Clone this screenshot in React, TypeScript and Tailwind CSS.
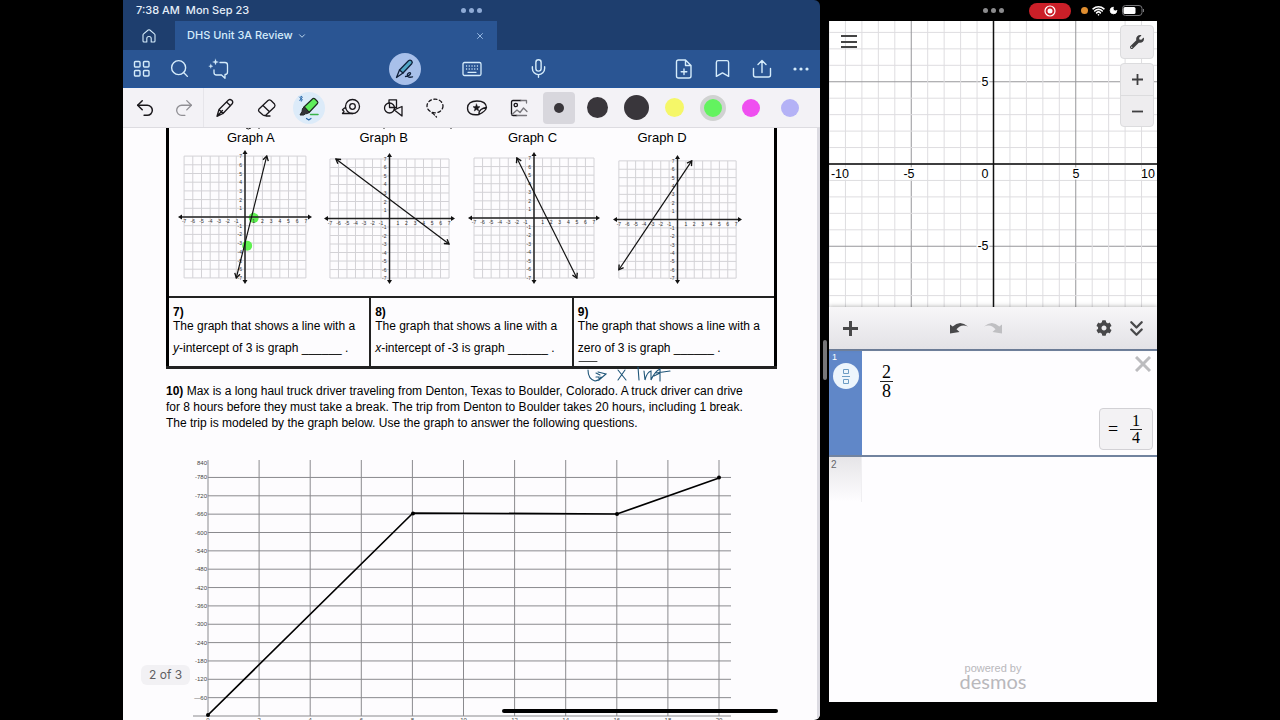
import React from 'react';
import { ChevronDown, X, Search, Mic, Bookmark, Undo2, Redo2, Wifi, Moon, ChevronsDown } from 'lucide-react';
import { FaWrench, FaCog } from 'react-icons/fa';

const miniGraphs = [
  { name: 'Graph A', size: 134, from: [2.5, 7], to: [-1, -7], marks: [[1, -0.1], [0.25, -3.3]] },
  { name: 'Graph B', size: 131, from: [-6.3, 7], to: [7, -3], marks: [] },
  { name: 'Graph C', size: 132, from: [-2, 7], to: [5, -7], marks: [] },
  { name: 'Graph D', size: 129, from: [1.7, 7], to: [-7, -6], marks: [] },
];

const questions = [
  { number: '7)', variable: 'y', rest: '-intercept of 3 is graph ______ .' },
  { number: '8)', variable: 'x', rest: '-intercept of -3 is graph ______ .' },
  { number: '9)', variable: '', rest: 'zero of 3 is graph ______ .' },
];

const ticks = [-7, -6, -5, -4, -3, -2, -1, 1, 2, 3, 4, 5, 6, 7];

function MiniGraph({ graph }: { graph: (typeof miniGraphs)[number] }) {
  const half = graph.size / 2;
  const unit = half / 7.7;
  const end = 7 * unit;
  const x1 = graph.from[0] * unit;
  const y1 = -graph.from[1] * unit;
  const x2 = graph.to[0] * unit;
  const y2 = -graph.to[1] * unit;
  const id = graph.name.replace(' ', '-');

  return (
    <svg
      width={graph.size}
      height={graph.size}
      viewBox={`${-half} ${-half} ${graph.size} ${graph.size}`}
      role="img"
      aria-label={graph.name}
    >
      <defs>
        <marker id={id} viewBox="0 0 8 8" refX="7" refY="4" markerWidth="6" markerHeight="6" orient="auto-start-reverse">
          <path d="M2 1 L7 4 L2 7" fill="none" stroke="#111" strokeWidth="1.5" />
        </marker>
      </defs>
      {[...ticks, 0].map((t) => (
        <g key={t} stroke="#d3d2d6" strokeWidth="1">
          <line x1={t * unit} x2={t * unit} y1={-end} y2={end} />
          <line y1={t * unit} y2={t * unit} x1={-end} x2={end} />
        </g>
      ))}
      {graph.marks.map(([x, y]) => (
        <circle key={y} cx={x * unit} cy={-y * unit} r="5" fill="#5ef04f" />
      ))}
      <line x1={-half + 2} x2={half - 2} y1="0" y2="0" stroke="#222" strokeWidth="1.5" />
      <line y1={-half + 2} y2={half - 2} x1="0" x2="0" stroke="#222" strokeWidth="1.5" />
      <g fill="#111">
        <path d={`M${-half} 0 l4 -2.5 v5z`} />
        <path d={`M${half} 0 l-4 -2.5 v5z`} />
        <path d={`M0 ${-half} l-2.5 4 h5z`} />
        <path d={`M0 ${half} l-2.5 -4 h5z`} />
      </g>
      <g fill="#333" fontSize="5" fontFamily="Liberation Sans, sans-serif">
        {ticks.map((t) => (
          <text key={`x${t}`} x={t * unit} y="6" textAnchor="middle">{t}</text>
        ))}
        {ticks.map((t) => (
          <text key={`y${t}`} x="-3" y={-t * unit + 2} textAnchor="end">{t}</text>
        ))}
      </g>
      <line
        x1={x1}
        y1={y1}
        x2={x2}
        y2={y2}
        stroke="#111"
        strokeWidth="1.2"
        markerStart={`url(#${id})`}
        markerEnd={`url(#${id})`}
      />
    </svg>
  );
}

function TripChart() {
  const left = 42;
  const bottom = 257;
  const col = 51.1;
  const row = 18.35;
  const rows = Array.from({ length: 14 }, (_, i) => i);
  const cols = Array.from({ length: 11 }, (_, i) => i);

  return (
    <svg viewBox="0 0 611 270" className="mt-7 block w-full" role="img" aria-label="Distance over time of the trip">
      <g stroke="#8a8a8e" strokeWidth="1">
        {rows.map((r) => (
          <line key={r} x1={r === 0 ? 27 : left} x2="565" y1={bottom - r * row} y2={bottom - r * row} />
        ))}
        {cols.map((c) => (
          <line key={c} x1={left + c * col} x2={left + c * col} y1="1" y2={bottom} />
        ))}
      </g>
      <g fill="#444" fontSize="6" fontFamily="Liberation Sans, sans-serif">
        {rows.slice(1).map((r) => (
          <text key={r} x="41" y={bottom - r * row + 2} textAnchor="end">{r === 1 ? '—60' : `-${r * 60}`}</text>
        ))}
        <text x="41" y="6" textAnchor="end">840</text>
        {cols.map((c) => (
          <text key={c} x={left + c * col} y="263" textAnchor="middle">{c * 2}</text>
        ))}
      </g>
      <polyline points="42,256 247,54 451,55 553,19" fill="none" stroke="#000" strokeWidth="1.7" />
      <g fill="#000">
        <circle cx="42" cy="256" r="2" />
        <circle cx="247" cy="54.5" r="2" />
        <circle cx="451" cy="55" r="2" />
        <circle cx="553" cy="18.5" r="2" />
      </g>
    </svg>
  );
}

function Dots({ className }: { className: string }) {
  return (
    <span className={`flex gap-[3px] ${className}`}>
      <i className="size-[5px] rounded-full bg-current" />
      <i className="size-[5px] rounded-full bg-current" />
      <i className="size-[5px] rounded-full bg-current" />
    </span>
  );
}

function NavButton({ label, className = 'w-[39px]', children }: { label: string; className?: string; children: React.ReactNode }) {
  return (
    <button type="button" aria-label={label} className={`flex h-full items-center justify-center ${className}`}>
      {children}
    </button>
  );
}

function NotesHeader() {
  return (
    <header className="bg-[#1e3e6e] text-[#d5ecfb]">
      <div className="grid h-[21px] grid-cols-[1fr_auto_1fr] items-center px-[13px] font-['Inter',sans-serif] text-[11px] font-medium">
        <div className="flex gap-1.5 text-[#e3edf8]">
          <span>7:38 AM</span>
          <span>Mon Sep 23</span>
        </div>
        <Dots className="text-[#8fabd6]" />
      </div>
      <div className="flex h-[29px]">
        <NavButton label="Home" className="w-[52px]">
          <svg width="14" height="14" viewBox="0 0 14 14" fill="none" stroke="currentColor" strokeWidth="1.1" strokeLinejoin="round">
            <path d="M1 6 Q1 5.300 1.600 4.800 L6.200 1 Q7 .5 7.800 1 L12.400 4.800 Q13 5.300 13 6 V12 Q13 13 12 13 H9.200 V9.500 Q9.200 7.500 7 7.500 Q4.800 7.500 4.800 9.500 V13 H2 Q1 13 1 12Z" />
          </svg>
        </NavButton>
        <div className="flex w-[322px] items-center bg-[#2a5593] px-3 font-['Inter',sans-serif] text-[11px] font-medium">
          <span>DHS Unit 3A Review</span>
          <button type="button" aria-label="Document menu" className="ml-1">
            <ChevronDown size={10} strokeWidth={2} />
          </button>
          <button type="button" aria-label="Close tab" className="ml-auto text-[#a9c9ee]">
            <X size={10} strokeWidth={2} />
          </button>
        </div>
      </div>
      <nav className="grid h-[38px] grid-cols-[1fr_auto_1fr] border-b border-[#23569e] bg-[#2a5593]">
        <div className="flex">
          <NavButton label="Thumbnails" className="w-[37px]">
            <svg width="18" height="18" viewBox="0 0 18 18" fill="none" stroke="currentColor" strokeWidth="1.4">
              <rect x="1.500" y="1.500" width="5.500" height="5.500" rx="1" />
              <rect x="10.500" y="1.500" width="5.500" height="5.500" rx="1" />
              <rect x="1.500" y="10.500" width="5.500" height="5.500" rx="1" />
              <rect x="10.500" y="10.500" width="5.500" height="5.500" rx="1" />
            </svg>
          </NavButton>
          <NavButton label="Search">
            <Search size={21} strokeWidth={1.6} />
          </NavButton>
          <NavButton label="Ask AI">
            <svg width="22" height="22" viewBox="0 0 22 22" fill="none" stroke="currentColor" strokeWidth="1.3" strokeLinecap="round" strokeLinejoin="round">
              <path d="M12 4.500 H17 Q19.500 4.500 19.500 7 V14 Q19.500 16.500 17 16.500 V20.300 L13.500 17 H8.500 Q6 17 6 14.500 V12" />
              <path d="M7.500 1 L8.300 3.200 L10.500 4 L8.300 4.800 L7.500 7 L6.700 4.800 L4.500 4 L6.700 3.200Z" fill="currentColor" strokeWidth=".2" />
              <path d="M2.800 6 L3.400 7.600 L5 8.200 L3.400 8.800 L2.800 10.400 L2.200 8.800 L.6 8.200 L2.200 7.600Z" fill="currentColor" strokeWidth=".2" />
            </svg>
          </NavButton>
        </div>
        <div className="flex">
          <NavButton label="Annotate" className="w-[67px]">
            <span className="flex size-8 items-center justify-center rounded-full bg-[#a8c0ea]">
              <svg width="22" height="22" viewBox="0 0 22 22" fill="none" stroke="#10203a" strokeWidth="1.300" strokeLinecap="round" strokeLinejoin="round">
                <path d="M5.500 12 L14.500 2.800 Q16 1.500 17.500 2.800 Q19 4.300 17.700 5.800 L9 15 L5.500 12Z" fill="#51a5c4" />
                <path d="M5.500 12 L2.500 19.500 L9 15" />
                <path d="M11.500 18.500 Q15.500 18 16.500 15.800 Q16.800 14.300 15 14.800 Q12.800 16 13.500 18 Q14.500 20 18.500 18.800" />
              </svg>
            </span>
          </NavButton>
          <NavButton label="Keyboard" className="w-[67px]">
            <svg width="20" height="16" viewBox="0 0 20 16" fill="none" stroke="currentColor" strokeWidth="1.300" strokeLinecap="round">
              <rect x="1" y="1.500" width="18" height="13" rx="1.500" />
              <path d="M4.500 5 h.1 M7.200 5 h.1 M10 5 h.1 M12.700 5 h.1 M15.400 5 h.1 M4.500 8 h.1 M7.200 8 h.1 M10 8 h.1 M12.700 8 h.1 M15.400 8 h.1 M6 11.300 h8" />
            </svg>
          </NavButton>
          <NavButton label="Record" className="w-[67px]">
            <Mic size={21} strokeWidth={1.6} />
          </NavButton>
        </div>
        <div className="flex justify-end">
          <NavButton label="Add page">
            <svg width="18" height="20" viewBox="0 0 18 20" fill="none" stroke="currentColor" strokeWidth="1.400" strokeLinecap="round" strokeLinejoin="round">
              <path d="M3.500 1 H10.500 L16 6.500 V17 Q16 19 14 19 H3.500 Q1.500 19 1.500 17 V3 Q1.500 1 3.500 1Z M10.500 1 V6.500 H16 M9 10 v5.500 M6.200 12.700 h5.600" />
            </svg>
          </NavButton>
          <NavButton label="Bookmark">
            <Bookmark size={21} strokeWidth={1.6} />
          </NavButton>
          <NavButton label="Share">
            <svg width="20" height="20" viewBox="0 0 20 20" fill="none" stroke="currentColor" strokeWidth="1.400" strokeLinecap="round" strokeLinejoin="round">
              <path d="M1.500 9.500 V16 Q1.500 18 3.500 18 H16.500 Q18.500 18 18.500 16 V9.500 M10 13.500 V1.500 M6 5.500 L10 1.500 L14 5.500" />
            </svg>
          </NavButton>
          <NavButton label="More">
            <svg width="16" height="4" viewBox="0 0 16 4" fill="currentColor">
              <circle cx="2" cy="2" r="1.600" />
              <circle cx="8" cy="2" r="1.600" />
              <circle cx="14" cy="2" r="1.600" />
            </svg>
          </NavButton>
        </div>
      </nav>
    </header>
  );
}

const swatches = [
  { label: 'Thin stroke', dot: 'size-[10px] bg-[#39363b]', holder: 'rounded bg-[#d8d7dd]' },
  { label: 'Medium stroke', dot: 'size-[21px] bg-[#39363b]', holder: '' },
  { label: 'Thick stroke', dot: 'size-[25px] bg-[#39363b]', holder: '' },
  { label: 'Yellow', dot: 'size-[19px] bg-[#f5f768]', holder: '' },
  { label: 'Green', dot: 'size-[26px] border-4 border-[#d0d2d1] bg-[#63f35f]', holder: '' },
  { label: 'Pink', dot: 'size-[18px] bg-[#ef4ff0]', holder: '' },
  { label: 'Lavender', dot: 'size-[18px] bg-[#b4b2f6]', holder: '' },
];

function PenToolbar() {
  const icon = {
    width: 22,
    height: 22,
    viewBox: '0 0 22 22',
    fill: 'none',
    stroke: '#19171b',
    strokeWidth: 1.3,
    strokeLinecap: 'round' as const,
    strokeLinejoin: 'round' as const,
  };

  return (
    <div className="flex h-10 border-b border-[#dddce1] bg-[#f3f2f6] pl-0.5 text-[#19171b]">
      <div className="flex border-r border-[#e6e5ea]">
        <NavButton label="Undo">
          <Undo2 size={22} strokeWidth={1.6} />
        </NavButton>
        <NavButton label="Redo">
          <Redo2 size={22} strokeWidth={1.4} className="text-[#8f8e93]" />
        </NavButton>
      </div>
      <div className="flex">
        <NavButton label="Pen" className="w-[42px]">
          <svg {...icon}>
            <path d="M5 12.500 L14.500 3 Q16 1.800 17.800 3.300 Q19.500 5 18.200 6.800 L9 16.500 L3 19.300Z M12.500 5 L16.500 8.700 M5 12.500 L9 16.500 M3 19.300 L8.500 13.500" />
          </svg>
        </NavButton>
        <NavButton label="Eraser" className="w-[42px]">
          <svg {...icon}>
            <path d="M3 12 L12 3.500 Q13.500 2.300 15 3.500 L18.500 7 Q19.500 8.500 18.500 10 L10 18 Q8.500 19 7 18 L3 14.500 Q2 13.200 3 12Z M7 8.500 L13.500 14.800 M10 19 H14" />
          </svg>
        </NavButton>
        <NavButton label="Highlighter" className="w-[42px]">
          <span className="flex size-8 items-center justify-center rounded-full bg-[#dcebf9]">
            <svg width="26" height="28" viewBox="0 0 26 28" fill="none" strokeLinecap="round" strokeLinejoin="round">
              <path d="M8 13 L17 4.500 Q18 4 19 5 L21.500 7.500 Q22.300 8.500 21.500 9.500 L13 18.500Z" fill="#5fec5b" stroke="#1d2a20" strokeWidth="1.200" />
              <path d="M8 13 L6.500 14.500 L6 17.500 L4 21 H7.500 L9.500 19.800 L11.500 19.500 L13 18.500Z" fill="#343438" stroke="#222" />
              <path d="M14.500 20.500 H22" stroke="#38b34a" strokeWidth="1.500" />
              <path d="M3.500 3 L6.500 6 L5 7.300 V2 L6.500 3.300 L3.500 6.300" stroke="#2767a8" strokeWidth=".9" />
              <path d="M10.500 24.500 L12.800 26 L15 24.500" stroke="#2767a8" strokeWidth="1.200" />
            </svg>
          </span>
        </NavButton>
        <NavButton label="Tape" className="w-[42px]">
          <svg {...icon}>
            <circle cx="12.500" cy="9.500" r="7" />
            <circle cx="12.500" cy="9.500" r="2.800" />
            <path d="M12.500 16.500 H2.500 L4 14.500 L2.500 12.800 L4.500 11 H5.700" />
          </svg>
        </NavButton>
        <NavButton label="Shapes" className="w-[42px]">
          <svg {...icon}>
            <path d="M7 6 V2.800 H14.500 V10.500 H12" />
            <circle cx="7.500" cy="11" r="5" />
            <path d="M12 12.800 L20 9.500 V19Z M7.500 6 V10.500 H12.500" />
          </svg>
        </NavButton>
        <NavButton label="Lasso" className="w-[42px]">
          <svg {...icon}>
            <ellipse cx="11" cy="9" rx="8" ry="6.800" strokeDasharray="3 2.600" />
            <path d="M8 16 Q9.500 16.500 10.500 18 M12 19.500 L12.500 20" />
          </svg>
        </NavButton>
        <NavButton label="Stickers" className="w-[42px]">
          <svg {...icon}>
            <path d="M13 17.500 Q1.500 19 1.500 11 Q2 4 11 4 Q20 4 20.500 10.500 Q20 14 13 17.500Z M13 17.500 Q12.500 14.500 15 12.500 Q17 11 20.500 10.500" />
            <path d="M10.500 7 L11.500 9.500 L14 9.700 L12 11.400 L12.700 14 L10.500 12.600 L8.300 14 L9 11.400 L7 9.700 L9.500 9.500Z" fill="#19171b" strokeWidth=".5" />
          </svg>
        </NavButton>
        <NavButton label="Image" className="w-[42px]">
          <svg {...icon}>
            <path d="M13 3.500 H5 Q3.500 3.500 3.500 5 V17 Q3.500 18.500 5 18.500 H9" />
            <circle cx="7.800" cy="8" r="1.700" />
            <path d="M13 3.500 H18.500 V6 M9 18.500 H18.500 M4 17.500 L9 13 L12 15.500 L15.500 11 L19 14.500" stroke="#77767b" />
          </svg>
        </NavButton>
      </div>
      <div className="grid flex-1 grid-cols-7 pr-[11px]">
        {swatches.map((s) => (
          <button key={s.label} type="button" aria-label={s.label} className="flex items-center justify-center">
            <span className={`flex size-8 items-center justify-center ${s.holder}`}>
              <i className={`rounded-full ${s.dot}`} />
            </span>
          </button>
        ))}
      </div>
    </div>
  );
}

function Worksheet() {
  return (
    <main className="relative flex-1 overflow-hidden border-r-3 border-[#dcdbe2] bg-[#fdfcfe] pr-10 pl-[43px] font-['Liberation_Sans',Arial,sans-serif] text-xs text-black">
      <table className="w-full table-fixed border-collapse border-3 border-t-0 border-black text-left">
        <tbody>
          <tr>
            <td colSpan={3} className="h-[169px] p-0 align-top">
              <svg width="300" height="2" viewBox="0 0 300 2" className="block" stroke="#222" fill="none">
                <path d="M77 0 Q79 2 82 0 M90 0 v1 M215 0 v1 M282 0 v1" />
              </svg>
              <div className="grid grid-cols-[133fr_149fr_130fr_137fr] pl-[58px] text-[13px] leading-4">
                {miniGraphs.map((g) => (
                  <span key={g.name}>{g.name}</span>
                ))}
              </div>
              <div className="mt-1 grid grid-cols-4 items-end justify-items-center pr-6 pl-1">
                {miniGraphs.map((g) => (
                  <MiniGraph key={g.name} graph={g} />
                ))}
              </div>
            </td>
          </tr>
          <tr>
            {questions.map((q) => (
              <td key={q.number} className="relative h-[70px] border-2 border-b-3 border-[#222] py-0 pt-[7px] pl-1 align-top leading-[14px]">
                <b>{q.number}</b>
                <p className="whitespace-nowrap">The graph that shows a line with a</p>
                <p className="mt-2 whitespace-nowrap">
                  {q.variable && <i>{q.variable}</i>}
                  {q.rest}
                </p>
                {q.number === '9)' && (
                  <svg width="96" height="26" viewBox="0 0 96 26" fill="none" strokeLinecap="round" className="absolute top-[61px] left-1">
                    <path d="M1 2.500 H19" stroke="#444" />
                    <path
                      d="M10 11 Q10 20 17 22 Q22 21 23 18 M18 14 L22 16 M20 13 L28 15 L21 21 L21 18 L18 18 M40 11 L48 21 M47 11 L40 21 M60 8 L61 21 M66 12 L67 21 Q69 13 73 12 L73 21 Q77 12 82 10 L82 22 M76 17 L82 14 M78 14 L92 12"
                      stroke="#1f5578"
                      strokeWidth="1.100"
                    />
                  </svg>
                )}
              </td>
            ))}
          </tr>
        </tbody>
      </table>
      <p className="mt-3.5 leading-4 whitespace-nowrap">
        <b>10)</b> Max is a long haul truck driver traveling from Denton, Texas to Boulder, Colorado. A truck driver can drive
        <br />
        for 8 hours before they must take a break. The trip from Denton to Boulder takes 20 hours, including 1 break.
        <br />
        The trip is modeled by the graph below. Use the graph to answer the following questions.
      </p>
      <TripChart />
      <span className="absolute bottom-[35px] left-[18px] rounded-md bg-[#f2f1f4] px-2 py-0.5 font-['Inter',sans-serif] text-xs text-[#5f5e63]">
        2 of 3
      </span>
      <div className="absolute right-[39px] bottom-[7px] h-1 w-[276px] rounded-full bg-black" />
    </main>
  );
}

function GraphPaper() {
  const unit = 16.45;
  const lines = Array.from({ length: 21 }, (_, i) => i - 10);

  return (
    <svg viewBox="0 0 328 286" preserveAspectRatio="xMidYMid slice" className="h-full w-full bg-white" role="img" aria-label="Coordinate plane">
      {lines.map((n) => (
        <g key={n} stroke={n % 5 === 0 && Math.abs(n) < 10 ? '#97979a' : '#dedde0'} strokeWidth="1">
          <line x1={164.5 + n * unit} x2={164.5 + n * unit} y1="0" y2="286" />
          <line y1={143 + n * unit} y2={143 + n * unit} x1="0" x2="328" />
        </g>
      ))}
      <path d="M164.500 0 V286 M0 143 H328" stroke="#111" strokeWidth="1.500" />
      <g fontSize="12.500" fontFamily="Liberation Sans, Arial, sans-serif" textAnchor="middle" fill="#000" stroke="#fff" strokeWidth="3" paintOrder="stroke">
        <text x="11" y="157">-10</text>
        <text x="80" y="157">-5</text>
        <text x="156" y="157">0</text>
        <text x="247" y="157">5</text>
        <text x="319" y="157">10</text>
        <text x="156" y="65">5</text>
        <text x="154" y="229">-5</text>
      </g>
    </svg>
  );
}

function Fraction({ top, bottom, className }: { top: string; bottom: string; className: string }) {
  return (
    <span className={`inline-flex flex-col items-center font-['Liberation_Serif',serif] ${className}`}>
      <span className="border-b border-[#222] px-0.5">{top}</span>
      <span>{bottom}</span>
    </span>
  );
}

function Calculator() {
  return (
    <section className="flex flex-col pb-[18px]">
      <div className="grid h-[21px] grid-cols-[1fr_auto_1fr] items-center">
        <span />
        <Dots className="text-[#8b8b8d]" />
        <div className="flex items-center justify-end gap-1 pr-3 text-white">
          <span className="mr-1.5 flex h-4 w-[42px] items-center justify-center rounded-full bg-[#cb1f28]">
            <svg width="12" height="12" viewBox="0 0 12 12">
              <circle cx="6" cy="6" r="5" fill="none" stroke="#fff" strokeWidth="1.200" />
              <circle cx="6" cy="6" r="2.500" fill="#fff" />
            </svg>
          </span>
          <i className="size-[7px] rounded-full bg-[#e08e30]" />
          <Wifi size={13} strokeWidth={3} />
          <Moon size={9} fill="currentColor" />
          <svg width="23" height="11" viewBox="0 0 23 11">
            <rect x=".5" y=".5" width="19.500" height="10" rx="3" fill="none" stroke="#77777a" />
            <rect x="1.500" y="2" width="12" height="7" rx="1.500" fill="#fff" />
            <path d="M21.500 4 v3" stroke="#77777a" />
          </svg>
        </div>
      </div>
      <div className="relative h-[286px]">
        <GraphPaper />
        <button type="button" aria-label="Open menu" className="absolute top-3.5 left-3 flex h-[13px] w-4 flex-col justify-between">
          <i className="h-0.5 w-full bg-[#444]" />
          <i className="h-0.5 w-full bg-[#444]" />
          <i className="h-0.5 w-full bg-[#444]" />
        </button>
        <div className="absolute top-1 right-[3px] flex flex-col gap-1 text-[#3f3f41]">
          <button type="button" aria-label="Graph settings" className="box-content flex size-8 items-center justify-center rounded border border-[#dcdcde] bg-[#eeedef]">
            <FaWrench size={14} />
          </button>
          <div className="rounded border border-[#dcdcde] bg-[#eeedef]">
            <button type="button" aria-label="Zoom in" className="flex h-8 w-8 items-center justify-center border-b border-[#dcdcde]">
              <svg width="11" height="11" viewBox="0 0 11 11" stroke="currentColor" strokeWidth="1.800">
                <path d="M5.500 0 V11 M0 5.500 H11" />
              </svg>
            </button>
            <button type="button" aria-label="Zoom out" className="flex h-[30px] w-8 items-center justify-center">
              <svg width="11" height="11" viewBox="0 0 11 11" stroke="currentColor" strokeWidth="1.800">
                <path d="M0 5.500 H11" />
              </svg>
            </button>
          </div>
        </div>
      </div>
      <div className="relative flex h-[42px] justify-between bg-linear-to-b from-[#f7f6f8] to-[#e3e2e6] text-[#48484a] shadow-[0_-1px_4px_rgba(0,0,0,0.25)]">
        <NavButton label="Add expression" className="w-[42px]">
          <svg width="15" height="15" viewBox="0 0 15 15" stroke="currentColor" strokeWidth="3">
            <path d="M7.500 0 V15 M0 7.500 H15" />
          </svg>
        </NavButton>
        <div className="flex pr-1.5">
          <NavButton label="Undo edit" className="w-[34px]">
            <svg width="18" height="12" viewBox="0 0 18 12" fill="currentColor">
              <path d="M0 2.500 L2.700 4.500 Q10 -2.500 18 4.500 Q11 1.500 6.500 7.300 L9.500 10 L0 11.500Z" />
            </svg>
          </NavButton>
          <NavButton label="Redo edit" className="w-[34px] text-[#bfbfc2]">
            <svg width="18" height="12" viewBox="0 0 18 12" fill="currentColor">
              <path d="M18 2.500 L15.300 4.500 Q8 -2.500 0 4.500 Q7 1.500 11.500 7.300 L8.500 10 L18 11.500Z" />
            </svg>
          </NavButton>
        </div>
        <div className="flex pr-1">
          <NavButton label="Edit list" className="w-[33px]">
            <FaCog size={16} />
          </NavButton>
          <NavButton label="Hide list" className="w-[33px]">
            <ChevronsDown size={25} strokeWidth={2.2} />
          </NavButton>
        </div>
      </div>
      <div className="flex flex-1 flex-col bg-[#fefdff] font-['Liberation_Sans',Arial,sans-serif]">
        <div className="flex h-[108px] border-y-2 border-[#72839f]">
          <div className="w-[33px] bg-[#6087c8] text-[9px] leading-3 text-white">
            <span className="block pl-[3px]">1</span>
            <span className="mx-auto flex size-[26px] items-center justify-center rounded-full bg-[#edf5fc]">
              <svg width="8" height="15" viewBox="0 0 8 15" fill="none" stroke="#6c9cc4">
                <path d="M1.500 .5 h5 v4 h-5z M0 7.500 h8 M1.500 10.500 h5 v4 h-5z" />
              </svg>
            </span>
          </div>
          <div className="pt-2.5 pl-[18px]">
            <Fraction top="2" bottom="8" className="text-[18px] leading-[18px]" />
          </div>
          <div className="ml-auto flex flex-col items-end justify-between pt-[5px] pr-1 pb-[5px]">
            <button type="button" aria-label="Delete expression" className="mr-0.5 text-[#bcbcbf]">
              <svg width="16" height="16" viewBox="0 0 16 16" stroke="currentColor" strokeWidth="3">
                <path d="M1 1 L15 15 M15 1 L1 15" />
              </svg>
            </button>
            <div className="flex h-[42px] w-[54px] items-center justify-between rounded border border-[#d2d1d5] bg-[#f3f2f4] px-2 font-['Liberation_Serif',serif] text-[18px]">
              <span>=</span>
              <Fraction top="1" bottom="4" className="mr-0.5 text-base leading-4" />
            </div>
          </div>
        </div>
        <div className="h-[45px] w-[33px] border-r border-[#f0eff2] bg-linear-to-b from-[#e6e5e8] to-[#fefdff] pt-0.5 pl-0.5 text-[10px] leading-3 text-[#66666a]">
          2
        </div>
        <footer className="mt-auto pb-3.5 text-center text-[#b9b8bc]">
          <p className="text-[11px] leading-3">powered by</p>
          <p className="font-['Lato',sans-serif] text-xl leading-[14px]">desmos</p>
        </footer>
      </div>
    </section>
  );
}

export default function App() {
  return (
    <div className="grid h-screen grid-cols-[697fr_9px_328fr] overflow-hidden bg-black px-[123px]">
      <section className="flex min-h-0 flex-col overflow-hidden rounded-r-md">
        <NotesHeader />
        <PenToolbar />
        <Worksheet />
      </section>
      <div className="flex items-center justify-center">
        <i className="h-10 w-1 rounded-full bg-[#77777a]" />
      </div>
      <Calculator />
    </div>
  );
}
